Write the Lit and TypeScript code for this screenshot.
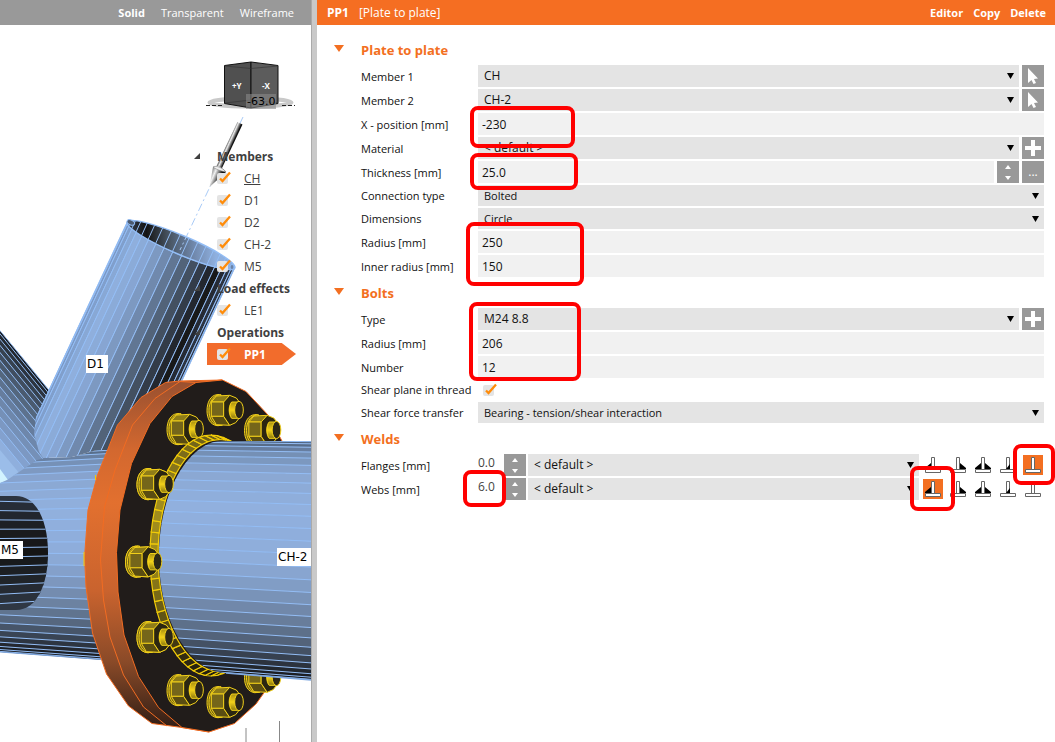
import { LitElement, html, css, svg, nothing } from "lit";
import { customElement, property } from "lit/decorators.js";
import { classMap } from "lit/directives/class-map.js";

type Pt = [number, number];
const pts = (list: Pt[]) => list.map((p) => p.map((n) => n.toFixed(2)).join(",")).join(" ");

/** Piecewise colour ramp, stops given as [position, r, g, b]. */
const ramp = (stops: number[][], t: number) => {
  let i = 1;
  while (i < stops.length - 1 && t > stops[i][0]) i++;
  const a = stops[i - 1];
  const b = stops[i];
  const k = Math.min(1, Math.max(0, (t - a[0]) / (b[0] - a[0])));
  const c = [1, 2, 3].map((j) => Math.round(a[j] + (b[j] - a[j]) * k));
  return `rgb(${c.join(",")})`;
};

const PIPE = [
  [0, 70, 88, 112], [0.05, 115, 141, 178], [0.14, 138, 167, 210], [0.28, 145, 176, 222],
  [0.5, 142, 173, 218], [0.62, 128, 155, 195], [0.74, 108, 130, 162], [0.84, 84, 101, 124],
  [0.92, 52, 62, 76], [1, 20, 20, 22],
];
const BRACE = [
  [0, 120, 150, 195], [0.12, 144, 176, 222], [0.28, 134, 164, 208], [0.42, 112, 137, 172],
  [0.56, 86, 104, 128], [0.68, 64, 76, 92], [0.78, 42, 48, 60], [0.86, 22, 22, 22],
  [0.93, 40, 46, 58], [1, 50, 60, 76],
];
const LINE = "#93bdf5";

@customElement("joint-scene")
export class JointScene extends LitElement {
  static styles = css`
    :host { display: block; overflow: hidden; }
    svg { display: block; width: 100%; height: 100%; }
    .tag { font: 12px "DejaVu Sans", sans-serif; fill: #000; }
    .angle { font: 11px "DejaVu Sans", sans-serif; fill: #000; }
    .cube { font: 700 8px "Open Sans", sans-serif; fill: #fff; }
  `;

  private pipe(x0: number, top0: number, bot0: number, x1: number, top1: number, bot1: number, n: number) {
    const at = (i: number, a: number, b: number) => a + ((b - a) * (1 - Math.cos((Math.PI * i) / n))) / 2;
    return Array.from({ length: n }, (_, i) => {
      const a0 = at(i, top0, bot0), a1 = at(i, top1, bot1);
      const b0 = at(i + 1, top0, bot0), b1 = at(i + 1, top1, bot1);
      const t = (a1 + b1 - 2 * top1) / (2 * (bot1 - top1));
      return svg`<polygon points=${pts([[x0, a0], [x1, a1], [x1, b1 + 0.5], [x0, b0 + 0.5]])} fill=${ramp(PIPE, t)} />
        <line x1=${x0} y1=${a0} x2=${x1} y2=${a1} stroke=${LINE} />`;
    });
  }

  private brace() {
    const n = 19;
    const rim = (a: number, s: number): Pt => {
      const u = -58.5 * Math.cos(a), v = 9.5 * Math.sin(a) * s;
      const c = Math.cos(0.4), d = Math.sin(0.4);
      return [181 + u * c - v * d, 245 + u * d + v * c];
    };
    const step = Math.PI / n;
    const idx = Array.from({ length: n }, (_, i) => i);
    const low = (p: Pt): Pt => [p[0] - 117, p[1] + 250];
    const up = (p: Pt): Pt => [p[0] - 10, p[1] + 22];
    return svg`
      <g clip-path="url(#brace-clip)">
        ${idx.map((i) => {
          const p = rim(i * step, 1), q = rim((i + 1) * step, 1);
          const t = (1 - Math.cos((i + 0.5) * step)) / 2;
          return svg`<polygon points=${pts([p, q, low(q), low(p)])} fill=${ramp(BRACE, t)} stroke=${LINE} />`;
        })}
      </g>
      <g clip-path="url(#mouth-clip)">
        <rect x="120" y="210" width="120" height="70" fill="url(#mouth)" />
        ${idx.map((i) => {
          const p = rim(i * step, -1), q = up(p);
          return svg`<line x1=${p[0]} y1=${p[1]} x2=${q[0]} y2=${q[1]} stroke=${LINE} />`;
        })}
      </g>
      <ellipse cx="181" cy="245" rx="58.5" ry="9.5" transform="rotate(23 181 245)" fill="none" stroke=${LINE} stroke-width="1.4" />
      <ellipse cx="131" cy="222.5" rx="4" ry="2.4" transform="rotate(23 131 222)" fill="#4b5a70" stroke=${LINE} />
      <ellipse cx="232" cy="267" rx="2" ry="2.5" fill="#6b83a8" stroke=${LINE} />`;
  }

  private weld() {
    const n = 64;
    const ring = (i: number, cx: number, rx: number, ry: number): Pt => {
      const a = (i / n) * 2 * Math.PI;
      return [cx + rx * Math.cos(a), 555.5 + ry * Math.sin(a)];
    };
    return Array.from({ length: 38 }, (_, k) => {
      const i = k + 14;
      const a = ring(i, 211, 61, 120.5), b = ring(i + 1, 211, 61, 120.5);
      const c = ring(i + 1, 220, 62, 116), d = ring(i, 220, 62, 116);
      const t = (a[1] - 435) / 241;
      return svg`<polygon points=${pts([a, b, c, d])} stroke="#f2cc08" stroke-width="1.2"
        fill=${ramp([[0, 110, 96, 24], [0.3, 160, 140, 30], [0.55, 160, 140, 26], [0.8, 90, 78, 20], [1, 34, 30, 16]], t)} />`;
    });
  }

  private bolt(x: number, y: number) {
    return svg`<g transform="translate(${x} ${y}) scale(0.3333)" stroke="#f2d01a" stroke-width="3" stroke-linejoin="round">
      <path d="M-12-46H-24C-44-44-54-22-54 2S-44 44-24 47L-8 46Z" fill="#6f6013" />
      <path d="M-18-46C-37-42-48-22-48 1S-38 42-20 47" fill="none" />
      <path d="M-41-24-26-42 14-44-1-24Z" fill="#8e7c19" />
      <path d="M-41-24H-4V19H-41Z" fill="#75661a" />
      <path d="M-41 19H-4L14 46-26 44Z" fill="#5a4d12" />
      <path d="M14-44-4-24V19L14 46 32 38 46 20V-20L34-36Z" fill="#2b2611" />
      <path d="M20-24H42V25H20C8 20 8-18 20-24Z" fill="url(#stud)" stroke="none" />
      <path d="M42-24H20C12-14 12 14 20 25H42" fill="none" />
      <ellipse cx="42" cy="0" rx="13" ry="26" fill="#2c2716" />
    </g>`;
  }

  private hub() {
    return Array.from({ length: 14 }, (_, i) => {
      const y = 492 + i * 9.3;
      const shade = ramp([[0, 44, 52, 64], [0.25, 28, 30, 34], [0.45, 20, 20, 20], [0.7, 32, 36, 42], [1, 52, 62, 76]], i / 13);
      return svg`<polygon points=${pts([[0, y], [50, y + (i - 4) * -0.5], [50, y + 10], [0, y + 10]])} fill=${shade} />
        <line x1="0" y1=${y} x2="50" y2=${y - (i - 4) * 0.4} stroke=${LINE} />`;
    });
  }

  private diagonal() {
    return Array.from({ length: 14 }, (_, i) => {
      const t = i / 14;
      const y = 330 + 120 * Math.pow(t, 1.35);
      return svg`<path d="M-2 ${y - 2} 80 ${y + 98}V600H-2Z"
        fill=${ramp([[0, 24, 26, 30], [0.2, 52, 62, 76], [0.4, 80, 98, 120], [0.6, 106, 130, 164], [0.85, 130, 160, 205], [1, 155, 188, 235]], t)}
        stroke=${LINE} />`;
    });
  }

  render() {
    const bolts: Pt[] = [[225, 410], [185, 429], [262.5, 430], [155, 484], [143.5, 561.5], [155, 637], [185, 690], [225, 702], [262.5, 677]];
    const face: Pt[] = [
      [196, 382.5], [222.5, 380], [246, 391.5], [268, 415], [282, 441], [290, 520], [290, 600], [280, 665], [266, 690],
      [256, 704], [234.5, 723.5], [209, 732], [182, 727.5], [158.5, 707.5], [138.5, 676.5], [124, 635], [118, 592],
      [116.5, 552.5], [120, 510], [131.5, 463.5], [150, 423.5], [172, 396.5],
    ];
    return html`<svg viewBox="0 25 311 717" preserveAspectRatio="xMinYMin slice" role="img" aria-label="Steel joint model">
      <defs>
        <clipPath id="brace-clip"><path d="M126 220 53 380 36 417 34 434 39 452 43 458 72 457 97 450H153L236 269 238 262Z" /></clipPath>
        <clipPath id="mouth-clip"><ellipse cx="181" cy="245" rx="58.5" ry="9.5" transform="rotate(23 181 245)" /></clipPath>
        <clipPath id="chord-clip"><path d="M0 483 7 480 37 460 45 458 72 457 97 450 118 446H135V662L100 660 0 652Z" /></clipPath>
        <clipPath id="pipe-clip"><path d="M311 441H222C190 441 159 490 159 556S190 672 226 673L311 680Z" /></clipPath>
        <clipPath id="hub-clip"><path d="M0 496H16C37 496 48 522 48 553S37 610 16 610H0Z" /></clipPath>
        <clipPath id="diagonal-clip"><path d="M0 330 49 388V459L37 462 7 481 0 484Z" /></clipPath>
        <linearGradient id="mouth" x1="0" x2="1">
          <stop offset="0.05" stop-color="#3b4656" /><stop offset="0.22" stop-color="#141414" />
          <stop offset="0.4" stop-color="#46525f" /><stop offset="0.62" stop-color="#7189ad" />
          <stop offset="0.8" stop-color="#8fb0df" />
        </linearGradient>
        <linearGradient id="side" x1="0" y1="0" x2="0" y2="1">
          <stop offset="0" stop-color="#985030" /><stop offset="0.2" stop-color="#d3682f" />
          <stop offset="0.35" stop-color="#e2702f" /><stop offset="0.6" stop-color="#c9632e" />
          <stop offset="0.8" stop-color="#8a4a28" /><stop offset="1" stop-color="#2c1b14" />
        </linearGradient>
        <linearGradient id="stud" x1="0" y1="0" x2="0" y2="1">
          <stop offset="0" stop-color="#a8900f" /><stop offset="0.5" stop-color="#f3d21a" /><stop offset="1" stop-color="#8b780f" />
        </linearGradient>
        <linearGradient id="shaft" gradientUnits="userSpaceOnUse" x1="226.5" y1="144" x2="232" y2="146.5">
          <stop offset="0.1" stop-color="#777" /><stop offset="0.35" stop-color="#eee" /><stop offset="0.6" stop-color="#888" /><stop offset="0.9" stop-color="#111" />
        </linearGradient>
        <linearGradient id="tip" gradientUnits="userSpaceOnUse" x1="211" y1="171" x2="222" y2="176">
          <stop offset="0" stop-color="#777" /><stop offset="0.35" stop-color="#f2f2f2" /><stop offset="0.6" stop-color="#888" /><stop offset="0.9" stop-color="#111" />
        </linearGradient>
      </defs>
      <g clip-path="url(#diagonal-clip)">${this.diagonal()}<path d="M0 450 20 474 0 484Z" fill="#9bbde9" /><path d="M0 469 8 480 0 484Z" fill="#d2f3ff" /></g>
      <g clip-path="url(#chord-clip)">${this.pipe(0, 454, 652, 135, 446, 662, 28)}</g>
      <path d="M0 652 135 662" stroke="#7fa8e0" />
      <g clip-path="url(#hub-clip)">${this.hub()}</g>
      ${this.brace()}
      <g stroke="#f26c22" stroke-width="1">
        <path d="M196 382.5 222 380 180 381 165.5 382.5 141 397.5 117.5 425 97.5 475 88 510 84.5 557 86 587 92.5 633 106.5 674 128.5 706 152 723.5 182 727.5 209 732 240 650 180 420Z" fill="url(#side)" />
        <path d="M196 382.5 180 381.5 155 398.5 132.5 425 115 470 104.5 507 100.5 560 103.5 600 110 637 123.5 675 143.5 707 167 726" fill="none" />
        <polygon points=${pts(face)} fill="#211c1a" />
      </g>
      <path d="M95.5 475V480M84 552V566" stroke="#f2cc08" />
      ${bolts.map(([x, y]) => this.bolt(x, y))}
      ${this.weld()}
      <g clip-path="url(#pipe-clip)">${this.pipe(158, 439, 668, 311, 441, 680, 29)}</g>
      <path d="M226 673 311 680" stroke="#7fa8e0" stroke-width="1.5" />
      ${[[155, 484], [143.5, 561.5], [155, 637]].map(([x, y]) => this.bolt(x, y))}
      <path d="M246 728V742M279.5 721V742" stroke="#888" />

      <ellipse cx="250.5" cy="102.5" rx="41" ry="4" fill="#fff" stroke="#c9c9c9" stroke-width="4" />
      <path d="M206 105.5H222M282 105.5H295" stroke="#222" stroke-dasharray="4 2" />
      <g stroke="#111" stroke-linejoin="round">
        <path d="M224.5 65.5 251 62V108L224.5 103.5Z" fill="#505050" />
        <path d="M251 62 278 65.5V103.5L251 108Z" fill="#5c5c5c" />
        <path d="M225 66 251 68.5 278 66M225 103 251 100 278 103" fill="none" stroke="#333" stroke-width="0.6" />
      </g>
      <text class="cube" x="232" y="89">+Y</text>
      <text class="cube" x="262" y="89">-X</text>
      <rect x="246" y="94" width="30" height="15" fill="#888" fill-opacity="0.6" />
      <text class="angle" x="247" y="105">-63.0</text>

      <path d="M243 117 180 250" stroke="#a9cbf7" stroke-dasharray="8 3 2 3" />
      <path d="M237.5 122 242.5 124.5 222 168 216.500 166Z" fill="url(#shaft)" />
      <path d="M213 167C216 165 223 168 226 172L209.5 187Z" fill="url(#tip)" />
      <path d="M213 167C216 165 223 168 226 172 221 171 217 170 213 167Z" fill="#eee" stroke="#777" stroke-width="0.5" />

      <rect x="86" y="355" width="22" height="18" fill="#fff" />
      <text class="tag" x="87" y="368">D1</text>
      <rect x="0" y="541" width="23" height="18" fill="#fff" />
      <text class="tag" x="1" y="554">M5</text>
      <rect x="277" y="548" width="34" height="18" fill="#fff" />
      <text class="tag" x="278" y="561">CH-2</text>
    </svg>`;
  }
}

@customElement("tick-box")
export class TickBox extends LitElement {
  @property() label = "";
  static styles = css`
    :host { display: block; }
    label { display: grid; width: 16px; height: 16px; align-items: center; }
    input, svg { grid-area: 1 / 1; }
    input { appearance: none; width: 11px; height: 11px; margin: 0; border-radius: 2px; background: #e4e4e4; }
    svg { pointer-events: none; }
  `;
  render() {
    return html`<label>
      <input type="checkbox" aria-label=${this.label} checked />
      <svg width="16" height="16" viewBox="0 0 16 16">
        <path d="M3 8.5 5.5 11 13 2.5" fill="none" stroke="#ff8c0a" stroke-width="2.3" />
      </svg>
    </label>`;
  }
}

@customElement("scene-tree")
export class SceneTree extends LitElement {
  static styles = css`
    :host { display: block; font-size: 12px; line-height: 20px; color: #404040; }
    ul { list-style: none; margin: 0; padding: 0; }
    span { padding-top: 2px; }
    .row { display: flex; align-items: center; height: 22px; padding-left: 23px; }
    .row tick-box { width: 27px; }
    .head { display: flex; align-items: center; height: 22px; font-weight: 700; gap: 17px; }
    .head svg { flex: none; }
    .current { text-decoration: underline; }
    .selected {
      margin-left: 13px; padding-left: 10px; width: 79px; background: #f26c2c; color: #fff; font-weight: 700;
      clip-path: polygon(0 0, 84% 0, 100% 50%, 84% 100%, 0 100%);
    }
  `;
  render() {
    const groups = [
      { title: "Members", items: ["CH", "D1", "D2", "CH-2", "M5"] },
      { title: "Load effects", items: ["LE1"] },
      { title: "Operations", items: ["PP1"] },
    ];
    return html`<ul>
      ${groups.map((g) => html`<li>
        <div class="head">
          <svg width="6" height="6" viewBox="0 0 6 6"><path d="M6 0V6H0Z" fill="#404040" /></svg>
          <span>${g.title}</span>
        </div>
        <ul>
          ${g.items.map((n) => html`<li class=${classMap({ row: true, selected: n === "PP1" })}>
            <tick-box label=${n}></tick-box><span class=${n === "CH" ? "current" : ""}>${n}</span>
          </li>`)}
        </ul>
      </li>`)}
    </ul>`;
  }
}

interface Row {
  id: string;
  label: string;
  kind: "select" | "text" | "spin" | "check" | "weld";
  value: string;
  action?: "pick" | "add";
  slim?: boolean;
  weld?: number;
}

const SECTIONS: { title: string; rows: Row[] }[] = [
  {
    title: "Plate to plate",
    rows: [
      { id: "member1", label: "Member 1", kind: "select", value: "CH", action: "pick" },
      { id: "member2", label: "Member 2", kind: "select", value: "CH-2", action: "pick" },
      { id: "xpos", label: "X - position [mm]", kind: "text", value: "-230" },
      { id: "material", label: "Material", kind: "select", value: "< default >", action: "add" },
      { id: "thickness", label: "Thickness [mm]", kind: "spin", value: "25.0" },
      { id: "connection", label: "Connection type", kind: "select", value: "Bolted", slim: true },
      { id: "dimensions", label: "Dimensions", kind: "select", value: "Circle", slim: true },
      { id: "radius", label: "Radius [mm]", kind: "text", value: "250" },
      { id: "inner", label: "Inner radius [mm]", kind: "text", value: "150" },
    ],
  },
  {
    title: "Bolts",
    rows: [
      { id: "type", label: "Type", kind: "select", value: "M24 8.8", action: "add" },
      { id: "bradius", label: "Radius [mm]", kind: "text", value: "206" },
      { id: "number", label: "Number", kind: "text", value: "12" },
      { id: "shear", label: "Shear plane in thread", kind: "check", value: "" },
      { id: "transfer", label: "Shear force transfer", kind: "select", value: "Bearing - tension/shear interaction", slim: true },
    ],
  },
  {
    title: "Welds",
    rows: [
      { id: "flanges", label: "Flanges [mm]", kind: "weld", value: "0.0", weld: 4 },
      { id: "webs", label: "Webs [mm]", kind: "weld", value: "6.0", weld: 0 },
    ],
  },
];

const WELD_KINDS = ["Left fillet", "Right fillet", "Both fillets", "Bevel", "None"];
const WELD_FILLS = ["M8 8V14H2V13Z", "M12 8 18 13V14H12Z", "M8 8V14H2V13ZM12 8 18 13V14H12Z", "M12 9V14H8Z", ""];

@customElement("property-panel")
export class PropertyPanel extends LitElement {
  static styles = css`
    :host { display: block; position: relative; padding: 11px 11px 11px 17px; }
    button { border: 0; padding: 0; font: inherit; color: inherit; cursor: pointer; }
    h2 { margin: 0; padding-top: 2px; font-size: 13px; line-height: 25px; color: #f36f21; }
    h2 button { display: flex; align-items: center; gap: 17px; background: none; }
    h2 svg { margin-bottom: 4px; }
    .rows { display: grid; gap: 2px; margin: 2px 0; padding-left: 27px; }
    .row { display: grid; grid-template-columns: 117px minmax(0, 1fr); height: 22px; }
    .row.slim { height: 21px; }
    .row.check { height: 20px; }
    .name { align-self: center; white-space: nowrap; font-size: 11px; padding-top: 2px; }
    .slim .name, .check .name { padding-top: 0; }
    .field { display: flex; gap: 3px; min-width: 0; }
    .field.weld { gap: 2px; }
    .drop { flex: 1; display: grid; min-width: 0; }
    .drop > * { grid-area: 1 / 1; }
    .drop svg { place-self: center end; margin-right: 5px; pointer-events: none; }
    select, input { appearance: none; font: inherit; color: #111; border: 0; border-radius: 0; margin: 0; min-width: 0; outline: 0; }
    select { background: #e4e4e4; padding: 0 20px 0 6px; }
    .slim select { font-size: 11px; }
    input { flex: 1; background: #f1f1f1; padding: 2px 4px 0; }
    .weld input { flex: 0 0 24px; width: 24px; background: #fff; padding: 0 0 4px; color: #444; }
    .square { flex: none; display: grid; place-items: center; width: 22px; background: #999; color: #fff; }
    .spin { flex: none; display: grid; width: 22px; background: #999; }
    .spin button { display: grid; place-items: center; background: none; }
    .kinds { display: flex; gap: 5px; padding: 1px 1px 1px 2px; }
    .kinds button { width: 20px; height: 20px; background: none; }
    .kinds button.on { background: #f36f21; }
    .kinds svg { display: block; }
    tick-box { align-self: center; margin-left: 5px; }
    .mark { position: absolute; box-sizing: border-box; border: 4px solid #f00; border-radius: 8px; pointer-events: none; }
    .m-position { left: 153px; top: 81px; width: 105px; height: 42px; }
    .m-thickness { left: 153px; top: 128px; width: 108px; height: 37px; }
    .m-radii { left: 149px; top: 197px; width: 118px; height: 64px; }
    .m-bolts { left: 152px; top: 277px; width: 112px; height: 79px; }
    .m-web { left: 146px; top: 445px; width: 43px; height: 37px; }
    .m-none { right: 0; top: 419px; width: 42px; height: 41px; }
    .m-left { right: 100px; top: 441px; width: 45px; height: 45px; }
  `;

  private drop(id: string, value: string, label = "") {
    return html`<div class="drop">
      <select id=${id} aria-label=${label || nothing}><option>${value}</option></select>
      <svg width="7" height="6" viewBox="0 0 7 6"><path d="M0 0H7L3.5 6Z" fill="#000" /></svg>
    </div>`;
  }

  private spinner() {
    return html`<span class="spin">
      <button aria-label="Increase"><svg width="6" height="4" viewBox="0 0 6 4"><path d="M3 0 6 4H0Z" fill="#fff" /></svg></button>
      <button aria-label="Decrease"><svg width="6" height="4" viewBox="0 0 6 4"><path d="M0 0H6L3 4Z" fill="#fff" /></svg></button>
    </span>`;
  }

  private action(kind: string) {
    return kind === "pick"
      ? html`<button class="square" aria-label="Pick in scene"><svg width="22" height="22" viewBox="0 0 22 22">
          <path d="M6 3V18L9.500 15 11.500 19 14 18 12 14 16 13.500Z" fill="#fff" /></svg></button>`
      : html`<button class="square" aria-label="Add"><svg width="22" height="22" viewBox="0 0 22 22">
          <path d="M9 3H13V9H19V13H13V19H9V13H3V9H9Z" fill="#fff" /></svg></button>`;
  }

  private field(r: Row) {
    switch (r.kind) {
      case "select":
        return html`${this.drop(r.id, r.value)}${r.action ? this.action(r.action) : nothing}`;
      case "text":
        return html`<input id=${r.id} type="text" .value=${r.value} />`;
      case "spin":
        return html`<input id=${r.id} type="text" .value=${r.value} />${this.spinner()}<button class="square" aria-label="More">...</button>`;
      case "check":
        return html`<tick-box id=${r.id} label=${r.label}></tick-box>`;
      default:
        return html`<input id=${r.id} type="text" .value=${r.value} />${this.spinner()}
          ${this.drop(`${r.id}-material`, "< default >", `${r.label} material`)}
          <div class="kinds">
            ${WELD_KINDS.map((name, i) => html`<button class=${i === r.weld ? "on" : ""} aria-label=${name}>
              <svg width="20" height="20" viewBox="0 0 20 20">
                <path d="M8.5 2.5H11.5V14.5H8.5ZM2.5 14.5H17.5V17.5H2.5Z" fill="#fff" stroke="#666" />
                <path d=${WELD_FILLS[i]} fill="#000" />
              </svg>
            </button>`)}
          </div>`;
    }
  }

  render() {
    return html`
      ${SECTIONS.map((s) => html`<section>
        <h2><button>
          <svg width="10" height="7" viewBox="0 0 10 7"><path d="M0 0H10L5 7Z" fill="#f36f21" /></svg>${s.title}
        </button></h2>
        <div class="rows">
          ${s.rows.map((r) => html`<div class=${classMap({ row: true, slim: !!r.slim, check: r.kind === "check" })}>
            <label class="name" for=${r.id}>${r.label}</label>
            <div class=${classMap({ field: true, weld: r.kind === "weld" })}>${this.field(r)}</div>
          </div>`)}
        </div>
      </section>`)}
      ${["position", "thickness", "radii", "bolts", "web", "none", "left"].map((m) => html`<div class="mark m-${m}"></div>`)}
    `;
  }
}

@customElement("app-root")
export class AppRoot extends LitElement {
  static styles = css`
    :host {
      display: grid; grid-template-columns: 311px 6px minmax(0, 1fr); min-height: 100vh;
      font: 12px/16px "Open Sans", "Noto Sans", sans-serif; color: #111; background: #fff;
    }
    button { border: 0; padding: 0; font: inherit; color: inherit; background: none; cursor: pointer; }
    .view { position: relative; display: grid; grid-template-rows: 25px 1fr; }
    .bar { display: flex; align-items: center; height: 25px; color: #fff; }
    .modes { justify-content: flex-end; gap: 16px; padding-right: 17px; background: #999; font-size: 11px; }
    .bold, .actions { font-weight: 700; }
    .split { background: #c9c9c9; border-left: 1px solid #aaa; box-sizing: border-box; }
    .title { background: #f56e22; padding: 0 9px 0 10px; gap: 10px; }
    .actions { display: flex; gap: 10px; margin-left: auto; font-size: 11px; }
    scene-tree { position: absolute; left: 194px; top: 145px; }
  `;
  render() {
    return html`
      <main class="view">
        <nav class="bar modes"><button class="bold">Solid</button><button>Transparent</button><button>Wireframe</button></nav>
        <joint-scene></joint-scene>
        <scene-tree></scene-tree>
      </main>
      <div class="split"></div>
      <aside>
        <header class="bar title">
          <span class="bold">PP1</span><span>[Plate to plate]</span>
          <div class="actions"><button>Editor</button><button>Copy</button><button>Delete</button></div>
        </header>
        <property-panel></property-panel>
      </aside>`;
  }
}
